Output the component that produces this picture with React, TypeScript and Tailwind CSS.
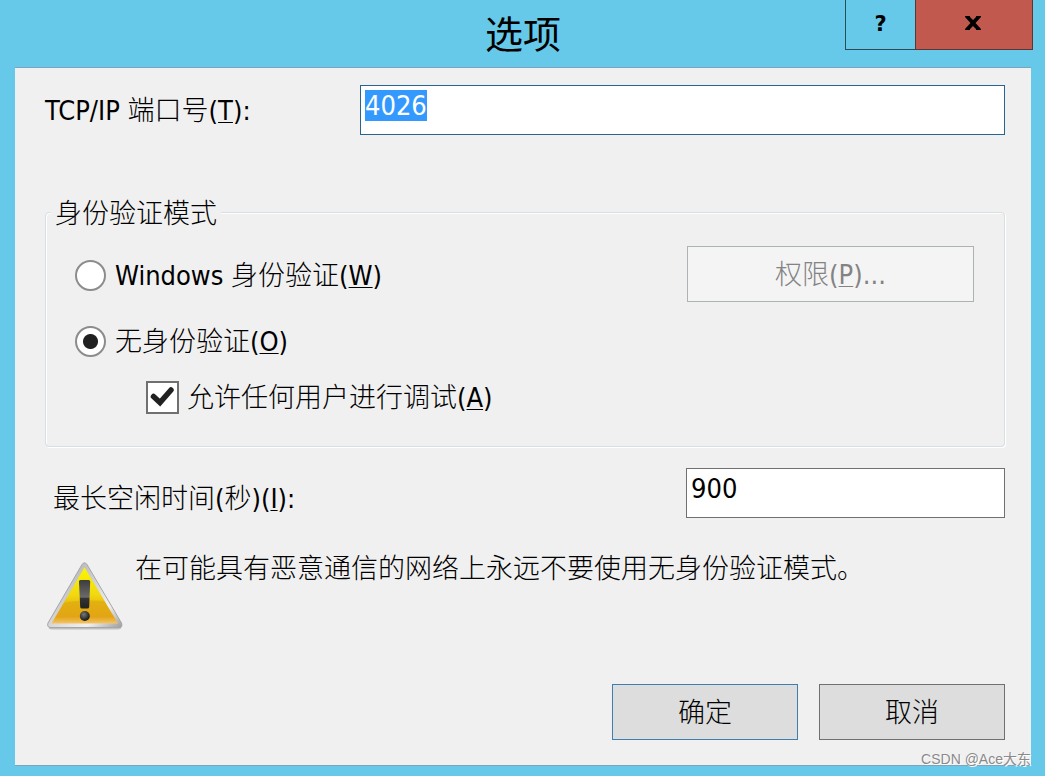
import { useEffect, useRef, type ReactNode } from "react";

function Key({ children }: { children: ReactNode }) {
  return <span className="underline decoration-1 underline-offset-2">{children}</span>;
}

function WarningIcon() {
  return (
    <svg viewBox="0 0 80 72" className="h-[72px] w-20 shrink-0" aria-hidden="true">
      <defs>
        <linearGradient id="rim" x1="0" y1="0" x2="1" y2="1">
          <stop offset="0" stopColor="#a4a4a4" />
          <stop offset="0.45" stopColor="#d2d2d2" />
          <stop offset="0.75" stopColor="#f1f1f1" />
          <stop offset="1" stopColor="#9c9c9c" />
        </linearGradient>
        <linearGradient id="gold" x1="0" y1="0" x2="0" y2="1">
          <stop offset="0" stopColor="#fbf600" />
          <stop offset="0.5" stopColor="#edcd18" />
          <stop offset="0.62" stopColor="#e2b010" />
          <stop offset="0.88" stopColor="#e3a414" />
          <stop offset="1" stopColor="#f3c468" />
        </linearGradient>
        <linearGradient id="mark" x1="0" y1="0" x2="0" y2="1">
          <stop offset="0" stopColor="#3c3c3c" />
          <stop offset="0.6" stopColor="#6a6a6a" />
          <stop offset="0.65" stopColor="#333333" />
          <stop offset="1" stopColor="#222222" />
        </linearGradient>
        <radialGradient id="dot" cx="0.4" cy="0.35" r="0.6">
          <stop offset="0" stopColor="#777777" />
          <stop offset="1" stopColor="#1d1d1d" />
        </radialGradient>
      </defs>
      <path d="M40 4 L76 64 Q78 68 73 68.500 H7 Q3 68.500 4 66 Z" fill="#000000" opacity="0.2" />
      <path
        d="M37 3.500 Q39.500 0 42 3.500 L76.500 62 Q78 66.500 74 66.500 H6 Q1.500 66.500 3 62 Z"
        fill="url(#rim)"
        stroke="#a6a6a6"
        strokeWidth="1"
      />
      <path d="M39.500 6.500 L73 62.500 H6.500 Z" fill="url(#gold)" />
      <path d="M39.500 6.500 L59 40 Q36 38 19 42 Z" fill="#fff600" opacity="0.25" />
      <path d="M34 20.500 Q34 19 35.500 19 H43.500 Q45.300 19 45.200 20.500 L44.200 46 Q44 47.500 42.500 47.500 H37 Q35.400 47.500 35.200 46 Z" fill="url(#mark)" />
      <circle cx="39.800" cy="55" r="5" fill="url(#dot)" />
    </svg>
  );
}

const radioClass =
  "h-[31px] w-[31px] shrink-0 appearance-none rounded-full border-2 border-[#8c8c8c] bg-white checked:bg-[radial-gradient(circle,#212121_7px,#ffffff_8px)]";

export default function App() {
  const portRef = useRef<HTMLInputElement>(null);

  useEffect(() => {
    portRef.current?.focus();
    portRef.current?.select();
  }, []);

  return (
    <div className="flex min-h-screen flex-col bg-[#66c9ea] pr-3.5 pb-2.5 pl-[15px] font-['DejaVu_Sans_Condensed','Noto_Sans_CJK_SC_Light','Noto_Sans_CJK_SC',sans-serif] text-[27px] leading-[33px] text-black">
      <header className="relative flex h-[67px] items-center justify-center">
        <h1 className="pb-1 font-['Noto_Sans_CJK_SC',sans-serif] text-[38px] leading-[60px]">选项</h1>
        <div className="absolute top-0 -right-0.5 flex h-[50px]">
          <button
            type="button"
            aria-label="帮助"
            className="flex w-[70px] items-center justify-center border-b border-l border-[#2d4a55] font-['DejaVu_Sans',sans-serif] text-[21px] font-bold"
          >
            ?
          </button>
          <button
            type="button"
            aria-label="关闭"
            className="flex w-[118px] items-center justify-center border-x border-b border-[#5d3533] bg-[#c1594f] pr-0.5 pb-1"
          >
            <svg viewBox="0 0 16 14" className="h-3.5 w-4" aria-hidden="true">
              <path d="M0 0h5v1l3 3 3-3v-1h5v1l-5.500 6 5.500 6v1h-5v-1l-3-3-3 3v1h-5v-1l5.500-6L0 1z" />
            </svg>
          </button>
        </div>
      </header>

      <main className="relative flex flex-1 flex-col border-y border-[#7ea3bd] bg-[#f0f0f0] pt-[17px] pr-[26px] pb-[25px] pl-[30px]">
        <div className="flex h-[50px] items-center">
          <label htmlFor="port" className="w-[315px]">
            TCP/IP 端口号(<Key>T</Key>):
          </label>
          <input
            ref={portRef}
            id="port"
            type="text"
            defaultValue="4026"
            className="h-[50px] min-w-0 flex-1 border border-[#29638f] bg-white px-1 pb-2.5 outline-none selection:bg-[#3399ff] selection:text-white"
          />
        </div>

        <fieldset className="mt-[57px] rounded-sm border border-[#d5dfe5] pr-[30px] pb-8 pl-[29px] shadow-[inset_1px_1px_0_white,1px_1px_0_white]">
          <legend className="-ml-6 bg-[#f0f0f0] px-1 pt-1 leading-9">身份验证模式</legend>
          <div className="mt-3.5 flex flex-col gap-3">
            <div className="flex h-14 items-center justify-between">
              <label className="flex items-center gap-[9px] pt-0.5">
                <input type="radio" name="auth" className={radioClass} />
                <span>Windows 身份验证(<Key>W</Key>)</span>
              </label>
              <button
                type="button"
                disabled
                className="h-14 w-[287px] border border-[#adb2b5] bg-[#f4f4f4] text-[#838383]"
              >
                权限(<Key>P</Key>)...
              </button>
            </div>
            <label className="flex h-[55px] items-center gap-[9px]">
              <input type="radio" name="auth" defaultChecked className={radioClass} />
              <span>无身份验证(<Key>O</Key>)</span>
            </label>
            <label className="ml-[71px] flex items-center gap-2">
              <span className="relative h-[33px] w-[33px]">
                <input
                  type="checkbox"
                  defaultChecked
                  className="peer block h-full w-full appearance-none border-2 border-[#707070] bg-white"
                />
                <svg
                  viewBox="0 0 33 33"
                  className="pointer-events-none absolute inset-0 hidden h-full w-full peer-checked:block"
                  aria-hidden="true"
                >
                  <path d="M7.500 15.500 L14 21.500 L25 9" fill="none" stroke="#212121" strokeWidth="5.500" strokeLinecap="round" />
                </svg>
              </span>
              <span>允许任何用户进行调试(<Key>A</Key>)</span>
            </label>
          </div>
        </fieldset>

        <div className="mt-[21px] flex h-[50px] items-center justify-between pl-2">
          <label htmlFor="idle" className="pt-2.5">
            最长空闲时间(秒)(<Key>I</Key>):
          </label>
          <input
            id="idle"
            type="text"
            defaultValue="900"
            className="h-[50px] w-[319px] border border-[#707070] bg-white px-1 pb-2.5 outline-none"
          />
        </div>

        <div className="mt-[34px] flex gap-2.5">
          <div className="pt-[9px]">
            <WarningIcon />
          </div>
          <p>在可能具有恶意通信的网络上永远不要使用无身份验证模式。</p>
        </div>

        <div className="mt-auto flex justify-end gap-[21px]">
          <button type="button" className="h-14 w-[186px] border border-[#3c7fb1] bg-[#dddddd]">
            确定
          </button>
          <button type="button" className="h-14 w-[186px] border border-[#707070] bg-[#dddddd]">
            取消
          </button>
        </div>

        <p className="absolute right-0 -bottom-1 font-['Liberation_Sans','Noto_Sans_CJK_SC',sans-serif] text-sm leading-5 text-[#8a8a8a] text-shadow-[1px_1px_0_white]">
          CSDN @Ace大东
        </p>
      </main>
    </div>
  );
}
